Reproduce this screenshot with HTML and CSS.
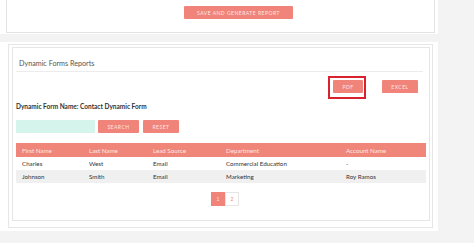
FILE: index.html
```html
<!DOCTYPE html>
<html lang="en">
<head>
    <meta charset="UTF-8">
    <meta name="viewport" content="width=device-width, initial-scale=1.0">
    <title>Dynamic Forms Reports</title>
    <link rel="stylesheet" href="styles.css">
</head>
<body>
    <div class="page">
        <div class="panel-top">
            <div class="box-top">
                <button class="btn btn-wide">Save and Generate Report</button>
            </div>
        </div>

        <div class="panel">
            <div class="outer-box">
                <div class="inner-box">
                    <div class="box-header">Dynamic Forms Reports</div>

                    <div class="actions">
                        <button class="btn btn-pdf">PDF</button>
                        <button class="btn btn-excel">Excel</button>
                    </div>

                    <div class="form-name">Dynamic Form Name: Contact Dynamic Form</div>

                    <div class="search-row">
                        <input type="text" class="search-input">
                        <button class="btn btn-search">Search</button>
                        <button class="btn btn-reset">Reset</button>
                    </div>

                    <table class="report-table">
                        <thead>
                            <tr>
                                <th class="col-first">First Name</th>
                                <th class="col-last">Last Name</th>
                                <th class="col-lead">Lead Source</th>
                                <th class="col-dept">Department</th>
                                <th>Account Name</th>
                            </tr>
                        </thead>
                        <tbody>
                            <tr>
                                <td>Charles</td>
                                <td>West</td>
                                <td>Email</td>
                                <td>Commercial Education</td>
                                <td>-</td>
                            </tr>
                            <tr>
                                <td>Johnson</td>
                                <td>Smith</td>
                                <td>Email</td>
                                <td>Marketing</td>
                                <td>Roy Ramos</td>
                            </tr>
                        </tbody>
                    </table>

                    <div class="pagination">
                        <a href="#" class="page-link active">1</a>
                        <a href="#" class="page-link">2</a>
                    </div>
                </div>
            </div>
        </div>
    </div>
</body>
</html>
```

FILE: styles.css
```css
body {
    font-family: 'Lato', 'Open Sans', sans-serif;
    margin: 0;
    padding: 0;
    background-color: #f3f3f3;
    color: #333;
}

.page {
    width: 438px;
}

.panel-top {
    background: #fff;
    padding: 0 3px 1px 6px;
}

.box-top {
    display: flex;
    border: 1px solid #e2e2e2;
    border-top: none;
    padding: 6px 0 13px 177px;
}

.btn {
    display: block;
    height: 13px;
    border: none;
    border-radius: 1px;
    background: #f0847a;
    color: #fde6e2;
    font-family: 'Lato', sans-serif;
    font-size: 5px;
    letter-spacing: 0.5px;
    text-transform: uppercase;
    padding: 0;
    margin: 0;
    cursor: pointer;
}

.btn-wide {
    width: 109px;
}

.panel {
    background: #fff;
    margin-top: 8px;
    padding: 2px 5px 3px 8px;
}

.outer-box {
    border: 1px solid #e6e6e6;
    padding: 2px 2px 6px 3px;
}

.inner-box {
    border: 1px solid #e6e6e6;
    padding: 0 3px 14px;
}

.box-header {
    font-size: 7.2px;
    line-height: 9px;
    color: #555;
    padding: 11px 0 3px 3px;
    margin-right: 3px;
    border-bottom: 1px solid #ececec;
}

.actions {
    display: flex;
    justify-content: flex-end;
    gap: 19px;
    margin-top: 8px;
    padding-right: 8px;
}

.btn-pdf {
    width: 30px;
    position: relative;
}

.btn-pdf::after {
    content: "";
    position: absolute;
    left: -5px;
    top: -4px;
    right: -3px;
    bottom: -6px;
    border: 2px solid #d8232f;
}

.btn-excel {
    width: 36px;
}

.form-name {
    margin-top: 10px;
    font-size: 6.5px;
    line-height: 8px;
    font-weight: bold;
    color: #333;
}

.search-row {
    display: flex;
    margin-top: 9px;
}

.search-input {
    display: block;
    width: 79px;
    height: 13px;
    box-sizing: border-box;
    border: none;
    border-radius: 1px;
    background: #d5f4ec;
    margin: 0 3px 0 0;
    padding: 0;
}

.btn-search {
    width: 41px;
    margin-right: 4px;
}

.btn-reset {
    width: 36px;
}

.report-table {
    width: 410px;
    margin-top: 10px;
    border-collapse: collapse;
    table-layout: fixed;
    font-size: 6.2px;
}

.report-table th {
    background: #f0857a;
    color: #fde9e5;
    font-weight: normal;
    text-align: left;
    height: 14px;
    padding: 0 0 0 6px;
}

.report-table td {
    height: 13px;
    padding: 0 0 0 6px;
    color: #333;
}

.report-table tbody tr:nth-child(2) {
    background: #f0f0f0;
}

.col-first {
    width: 61px;
}

.col-last {
    width: 58px;
}

.col-lead {
    width: 67px;
}

.col-dept {
    width: 114px;
}

.pagination {
    display: flex;
    justify-content: center;
    margin-top: 9px;
    padding-left: 8px;
}

.page-link {
    width: 14px;
    height: 14px;
    box-sizing: border-box;
    border: 1px solid #e6e6e6;
    font-size: 5px;
    line-height: 12px;
    text-align: center;
    color: #f0847a;
    text-decoration: none;
}

.page-link.active {
    background: #f0847a;
    border-color: #f0847a;
    color: #fde6e2;
}
```
